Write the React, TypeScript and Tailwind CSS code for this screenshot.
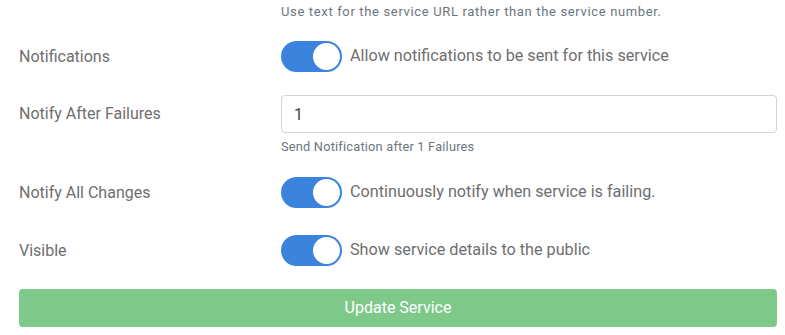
function Toggle() {
  return (
    <span className="relative inline-block h-[31px] w-[61px] shrink-0 rounded-full bg-[#3b84de]">
      <span className="absolute right-[2px] top-[2px] h-[27px] w-[27px] rounded-full bg-white" />
    </span>
  );
}

function SwitchRow({ label, text, className }: { label: string; text: string; className?: string }) {
  return (
    <div className={"flex items-center " + (className ?? "")}>
      <label className="w-[262px] shrink-0 text-[16px] text-[#6e6e6e]">{label}</label>
      <div className="flex items-center gap-[8px]">
        <Toggle />
        <span className="text-[16.2px] text-[#6e6e6e]">{text}</span>
      </div>
    </div>
  );
}

export default function App() {
  return (
    <div
      className="h-[335px] w-[785px] overflow-hidden bg-white pl-[19px] pr-[8px]"
      style={{ fontFamily: "Roboto, 'Noto Sans', sans-serif" }}
    >
      <div className="flex pt-[4px]">
        <div className="w-[262px] shrink-0" />
        <p className="text-[13px] leading-[16px] tracking-[0.65px] text-[#6c757d]">
          Use text for the service URL rather than the service number.
        </p>
      </div>

      <SwitchRow
        className="mt-[21px]"
        label="Notifications"
        text="Allow notifications to be sent for this service"
      />

      <div className="mt-[23px] flex items-center">
        <label className="w-[262px] shrink-0 text-[16px] text-[#6e6e6e]">Notify After Failures</label>
        <input
          readOnly
          value="1"
          className="h-[38px] flex-1 rounded-[4px] border border-[#d3d3d3] px-[12px] text-[16px] text-[#444] outline-none"
        />
      </div>
      <div className="flex">
        <div className="w-[262px] shrink-0" />
        <p className="mt-[6px] text-[12.8px] leading-[16px] tracking-[0.2px] text-[#6c757d]">
          Send Notification after 1 Failures
        </p>
      </div>

      <SwitchRow
        className="mt-[22px]"
        label="Notify All Changes"
        text="Continuously notify when service is failing."
      />

      <SwitchRow className="mt-[27px]" label="Visible" text="Show service details to the public" />

      <button className="mt-[23px] h-[38px] w-full rounded-[4px] bg-[#7ec98a] text-[16px] text-white">
        Update Service
      </button>
    </div>
  );
}
